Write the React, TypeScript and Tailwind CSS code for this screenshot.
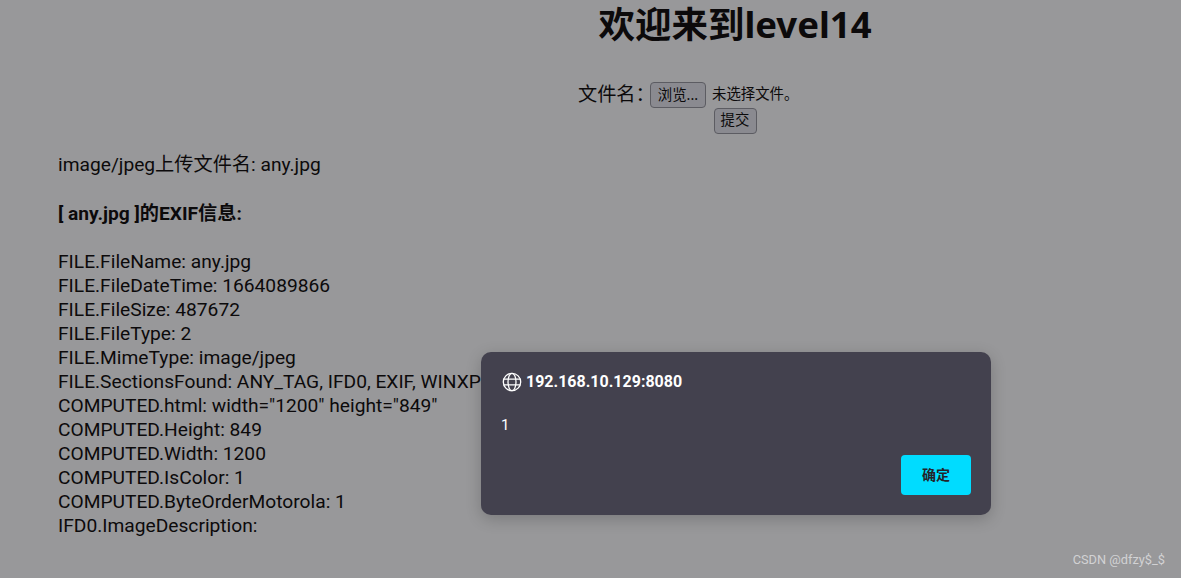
import React from 'react';

const font = { fontFamily: 'Roboto, "Noto Sans CJK SC", sans-serif' };

const exifRows = [
  'FILE.FileName: any.jpg',
  'FILE.FileDateTime: 1664089866',
  'FILE.FileSize: 487672',
  'FILE.FileType: 2',
  'FILE.MimeType: image/jpeg',
  'FILE.SectionsFound: ANY_TAG, IFD0, EXIF, WINXP',
  'COMPUTED.html: width="1200" height="849"',
  'COMPUTED.Height: 849',
  'COMPUTED.Width: 1200',
  'COMPUTED.IsColor: 1',
  'COMPUTED.ByteOrderMotorola: 1',
  'IFD0.ImageDescription:',
];

const GlobeIcon = () => (
  <svg width="20" height="20" viewBox="0 0 20 20" fill="none" stroke="#ffffff" strokeWidth="1.3">
    <circle cx="10" cy="10" r="8.7" />
    <ellipse cx="10" cy="10" rx="4" ry="8.7" />
    <path d="M1.6 7.2h16.8M1.6 12.8h16.8" />
  </svg>
);

const App: React.FC = () => {
  return (
    <div className="relative w-[1181px] h-[578px] overflow-hidden bg-[#98989a] text-[#0c0a0b]" style={font}>
      <div className="pl-[58px]">
        <div className="pl-[231px]">
          <h1 className="text-center text-[36.5px] leading-[48px] font-bold font-['Noto_Sans','Noto_Sans_CJK_SC',sans-serif]">欢迎来到level14</h1>

          <form className="mt-[34px] flex flex-col items-center">
            <div className="flex items-center h-[26px] text-[19.2px]">
              <span className="w-[72px] whitespace-nowrap">文件名：</span>
              <div className="flex items-center w-[242px]">
                <button type="button" className="h-[26px] w-[56px] rounded-[4px] border border-[#5c5c62] bg-[#8a8a90] text-[14.4px] leading-none font-['Noto_Sans','Noto_Sans_CJK_SC',sans-serif]">
                  浏览...
                </button>
                <span className="ml-[6px] text-[14.4px]">未选择文件。</span>
              </div>
            </div>
            <button type="button" className="h-[26px] w-[43px] rounded-[4px] border border-[#5c5c62] bg-[#8a8a90] text-[14.4px] leading-none">
              提交
            </button>
          </form>
        </div>

        <div className="mt-[19px] text-[19.2px] leading-[24px]">
          <p>image/jpeg上传文件名: any.jpg</p>
          <p className="mt-[25px] font-bold">[ any.jpg ]的EXIF信息:</p>
          <div className="mt-[24px]">
            {exifRows.map((row) => (
              <p key={row} className="whitespace-nowrap">{row}</p>
            ))}
          </div>
        </div>
      </div>

      {/* alert dialog */}
      <div className="absolute left-[481px] top-[352px] w-[510px] h-[163px] rounded-[10px] bg-[#43414e] shadow-[0_4px_16px_rgba(0,0,0,0.2)] pl-[21px] pr-[20px] pt-[20px] text-white">
        <div className="flex items-center gap-[4px] h-[20px]">
          <GlobeIcon />
          <span className="text-[16px] font-bold leading-[20px]">192.168.10.129:8080</span>
        </div>
        <p className="mt-[23px] -ml-px text-[15px] leading-[20px]">1</p>
        <div className="mt-[20px] flex justify-end">
          <button type="button" className="w-[70px] h-[40px] rounded-[4px] bg-[#00dcff] text-[#23232a] text-[14px] font-bold">
            确定
          </button>
        </div>
      </div>

      <div className="absolute right-[16px] bottom-[10px] text-[12.8px] leading-[16px] text-[#d2d2d4]">CSDN @dfzy$_$</div>
    </div>
  );
};

export default App;
